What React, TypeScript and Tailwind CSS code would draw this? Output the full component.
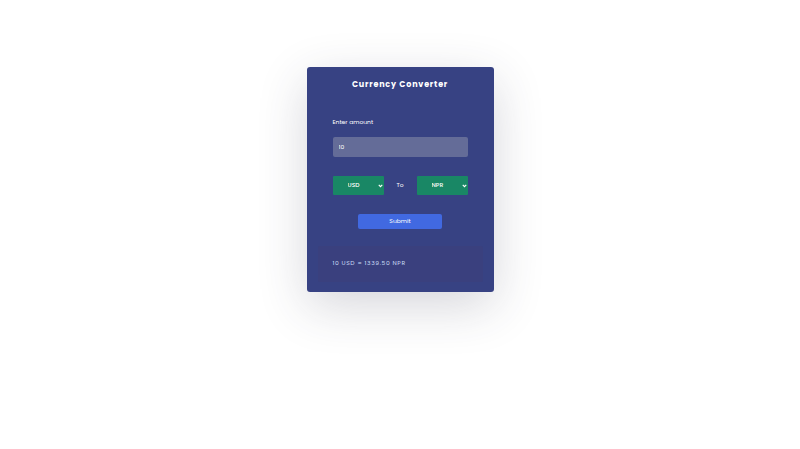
import { useState } from 'react';
import type { FormEvent } from 'react';

// value of one US dollar in each currency
const RATES: Record<string, number> = {
  USD: 1,
  NPR: 133.95,
  EUR: 0.92,
  INR: 83.7,
};

interface CurrencySelectProps {
  label: string;
  value: string;
  onChange: (value: string) => void;
}

function CurrencySelect({ label, value, onChange }: CurrencySelectProps) {
  return (
    <div className="relative w-[51px]">
      <select
        aria-label={label}
        value={value}
        onChange={(e) => onChange(e.target.value)}
        className="block h-[19px] w-full appearance-none rounded-[1px] bg-[#198765] pl-[15px] text-[6px] font-medium text-white outline-none"
      >
        {Object.keys(RATES).map((code) => (
          <option key={code} value={code}>
            {code}
          </option>
        ))}
      </select>
      <svg
        viewBox="0 0 8 6"
        className="pointer-events-none absolute right-px top-2 h-1 w-[5px]"
        fill="none"
        stroke="white"
        strokeWidth="1.8"
      >
        <path d="M1.2 1.2 L4 4.2 L6.8 1.2" />
      </svg>
    </div>
  );
}

export default function App() {
  const [amount, setAmount] = useState('10');
  const [from, setFrom] = useState('USD');
  const [to, setTo] = useState('NPR');
  const [result, setResult] = useState('10 USD = 1339.50 NPR');

  const handleSubmit = (e: FormEvent) => {
    e.preventDefault();
    const converted = (Number(amount) * RATES[to]) / RATES[from];
    setResult(`${amount} ${from} = ${converted.toFixed(2)} ${to}`);
  };

  return (
    <main className="flex min-h-screen items-start justify-center bg-white pt-[67px] font-['Poppins','Inter',sans-serif] text-white">
      <div className="w-full max-w-[187px] rounded-[3px] bg-[#374283] px-[11px] pb-[10px] pt-[11px] shadow-[0_14px_50px_rgba(50,50,75,0.2)]">
        <h1 className="text-center text-[8px] font-bold leading-[13px] tracking-widest">Currency Converter</h1>

        <form onSubmit={handleSubmit} className="px-[15px] pt-[26px]">
          <label htmlFor="amount" className="block text-[6px] leading-[10px]">
            Enter amount
          </label>
          <input
            id="amount"
            type="text"
            inputMode="decimal"
            value={amount}
            onChange={(e) => setAmount(e.target.value)}
            className="mt-[10px] block h-5 w-full rounded-[2px] bg-[#646c98] px-[6px] text-[6px] text-white outline-none"
          />

          <div className="mt-[19px] flex items-center justify-between">
            <CurrencySelect label="From currency" value={from} onChange={setFrom} />
            <span className="text-[6px]">To</span>
            <CurrencySelect label="To currency" value={to} onChange={setTo} />
          </div>

          <button
            type="submit"
            className="mx-auto mt-[19px] block h-[15px] w-5/8 rounded-[2px] bg-[#4169e1] text-[6px] leading-[15px]"
          >
            Submit
          </button>
        </form>

        {/* Conversion result */}
        <div className="mt-[17px] rounded-[2px] bg-[#3a407e] px-[15px] pb-[14px] pt-3">
          <p className="text-[6px] leading-[10px] tracking-widest text-[#c8dcf5]">{result}</p>
        </div>
      </div>
    </main>
  );
}
